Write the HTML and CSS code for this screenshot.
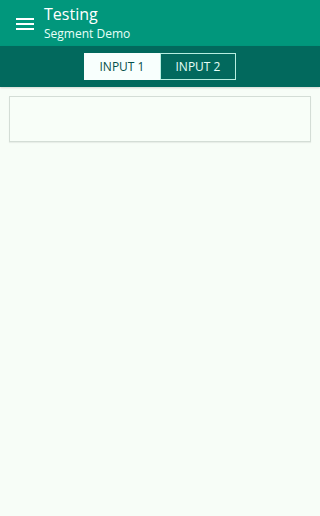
FILE: index.html
```html
<!DOCTYPE html>
<html>
<head>
<meta charset="utf-8">
<link rel="stylesheet" href="styles.css">
</head>
<body>
<header class="appbar">
  <button class="menu" aria-label="menu">
    <svg width="18" height="14" viewBox="0 0 18 14"><rect x="0" y="1" width="18" height="2" fill="#fff"/><rect x="0" y="6" width="18" height="2" fill="#fff"/><rect x="0" y="11" width="18" height="2" fill="#fff"/></svg>
  </button>
  <div class="titles">
    <div class="title">Testing</div>
    <div class="subtitle">Segment Demo</div>
  </div>
</header>
<div class="segbar">
  <div class="segment">
    <button class="seg active">INPUT 1</button>
    <button class="seg">INPUT 2</button>
  </div>
</div>
<main class="content">
  <div class="card"></div>
</main>
</body>
</html>
```
FILE: styles.css
```css
html, body { margin: 0; padding: 0; }
body {
  background: #f7fdf7;
  font-family: "Open Sans", "Noto Sans", sans-serif;
  height: 516px;
  overflow: hidden;
}
.appbar {
  height: 46px;
  background: #01977c;
  display: flex;
  align-items: center;
  box-sizing: border-box;
  padding-left: 16px;
}
.menu {
  background: none; border: 0; padding: 0;
  width: 18px; height: 14px;
  display: flex; margin-top: 2px;
}
.titles { margin-left: 10px; color: #fff; display: flex; flex-direction: column; margin-top: 1px; }
.title { font-size: 16px; line-height: 20px; margin-top: -1px; }
.subtitle { font-size: 12px; line-height: 16px; color: #e8fff8; margin-top: 2px; }
.segbar {
  height: 41px;
  background: #02695d;
  display: flex;
  justify-content: center;
  align-items: center;
  box-shadow: 0 1px 2px rgba(0,0,0,0.15);
}
.segment { display: flex; margin-top: -1px; }
.seg {
  width: 76px; height: 27px;
  box-sizing: border-box;
  border: 1px solid #b6eee0;
  background: transparent;
  color: #e6fff8;
  font-family: inherit;
  font-size: 12px;
  padding: 0;
  margin: 0;
}
.seg.active { background: #f8fffd; color: #06504a; border-color: #f8fffd; }
.content { padding: 9px 9px; }
.card {
  height: 46px;
  box-sizing: border-box;
  border: 1px solid #d4ddd6;
  background: #f8fef8;
  box-shadow: 0 1px 1px rgba(0,0,0,0.06);
}
```
